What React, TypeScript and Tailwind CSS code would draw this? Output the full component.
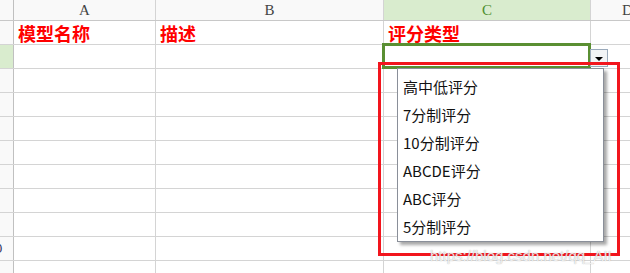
import React from 'react';

const options = ['高中低评分', '7分制评分', '10分制评分', 'ABCDE评分', 'ABC评分', '5分制评分'];

const cols = ['w-[14px]', 'w-[142px]', 'w-[228px]', 'w-[207px]', 'flex-1'];

function HeaderRow() {
  return (
    <div className="flex h-[21px] bg-[#f9f9f9] border-b border-[#c8c8c8] font-['Liberation_Serif',serif] text-[15px] text-[#444]">
      <div className="w-[14px] shrink-0 border-r border-[#c0c0c0]" />
      <div className="w-[142px] shrink-0 border-r border-[#d4d4d4] flex items-center justify-center">A</div>
      <div className="w-[228px] shrink-0 border-r border-[#d4d4d4] flex items-center justify-center">B</div>
      <div className="w-[207px] shrink-0 border-r border-[#d4d4d4] bg-[#d9ecce] text-[#4e8f2f] flex items-center justify-center">C</div>
      <div className="flex-1 min-w-0 overflow-hidden flex items-center">
        <span className="ml-[31px]">D</span>
      </div>
    </div>
  );
}

function Row({ index, cells }: { index: number; cells?: string[] }) {
  return (
    <div className="flex h-[24px] border-b border-[#d4d4d4]">
      <div
        className={`w-[14px] shrink-0 border-r border-[#c0c0c0] overflow-hidden flex items-center ${
          index === 2 ? 'bg-[#d9ecce]' : 'bg-[#f9f9f9]'
        }`}
      >
        {index === 10 && (
          <span className="-ml-[5px] text-[13px] text-[#283060] font-['Liberation_Sans',sans-serif]">0</span>
        )}
      </div>
      {cols.slice(1).map((w, i) => (
        <div
          key={i}
          className={`${w} shrink-0 ${i < 3 ? 'border-r border-[#d4d4d4]' : ''} flex items-center pl-[4px] text-[18px] font-bold text-[#ff0000] font-['Noto_Sans_CJK_SC',sans-serif] leading-none whitespace-nowrap`}
        >
          {cells?.[i]}
        </div>
      ))}
    </div>
  );
}

export default function App() {
  return (
    <div className="relative w-[630px] h-[273px] overflow-hidden bg-white">
      <HeaderRow />
      <Row index={1} cells={['模型名称', '描述', '评分类型']} />
      {[2, 3, 4, 5, 6, 7, 8, 9, 10, 11].map((n) => (
        <Row key={n} index={n} />
      ))}

      {/* active cell */}
      <div className="absolute left-[382px] top-[43px] w-[209px] h-[26px] border-[3px] border-[#5a8f32]" />

      {/* dropdown arrow */}
      <div className="absolute left-[590px] top-[49px] w-[18px] h-[18px] border border-[#9aaabb] bg-[#f2f4f6] flex items-center justify-center">
        <div className="w-0 h-0 border-l-[4px] border-r-[4px] border-t-[4px] border-l-transparent border-r-transparent border-t-black mt-[1px]" />
      </div>

      {/* list */}
      <div className="absolute left-[397px] top-[68px] w-[207px] h-[174px] bg-white border border-[#8a8f99] shadow-[3px_3px_3px_rgba(0,0,0,0.35)] pt-[3px] font-['Noto_Sans_CJK_SC',sans-serif] text-[15px] text-[#111]">
        {options.map((o) => (
          <div key={o} className="h-[28px] flex items-center pl-[5px] leading-none">
            {o}
          </div>
        ))}
      </div>

      {/* highlight box */}
      <div className="absolute left-[378px] top-[62px] w-[242px] h-[194px] border-[3px] border-[#f2151d]" />

      {/* watermark */}
      <div className="absolute left-[430px] top-[245px] text-[15px] font-['Liberation_Sans',sans-serif] text-white/80 [text-shadow:0_0_1px_rgba(120,120,120,0.7)] whitespace-nowrap">
        https://blog.csdn.net/qq_AII
      </div>
    </div>
  );
}
